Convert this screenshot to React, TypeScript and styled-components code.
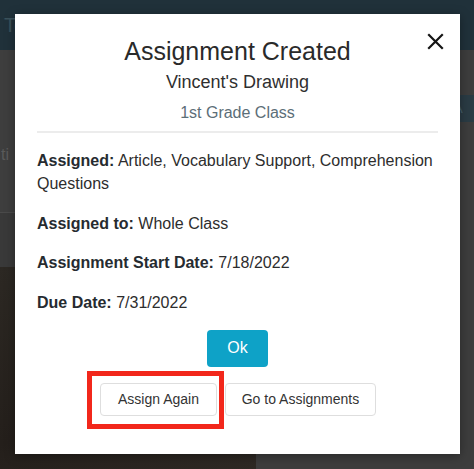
import React from 'react';
import styled, { createGlobalStyle } from 'styled-components';

const GlobalStyle = createGlobalStyle`
  html, body {
    margin: 0;
    padding: 0;
    overflow: hidden;
  }
  body {
    font-family: "Liberation Sans", Arial, sans-serif;
    background: #3c3c3c;
  }
`;

const Page = styled.div`
  width: 474px;
  height: 469px;
  display: flex;
  flex-direction: column;
  position: relative;
  overflow: hidden;
`;

const TopBar = styled.div`
  height: 50px;
  background: #20313a;
  display: flex;
  align-items: center;
  padding-left: 4px;
  color: #3b525c;
  font-size: 20px;
`;

const Backdrop = styled.div`
  flex: 1;
  display: grid;
  grid-template-columns: 256px 1fr;
`;

const LeftColumn = styled.div`
  display: flex;
  flex-direction: column;
`;

const LeftTop = styled.div`
  height: 163px;
  background: #3e3e3e;
  border-bottom: 1px solid #4a4a4a;
  padding: 96px 0 0 1px;
  box-sizing: border-box;
`;

const FadedWord = styled.span`
  display: inline-block;
  color: #5a5a5a;
  font-size: 16px;
`;

const LeftMid = styled.div`
  height: 54px;
  background: #393939;
`;

const Photo = styled.div`
  flex: 1;
  background: linear-gradient(160deg, #2c2823 0%, #241f1b 60%, #2e2924 100%);
`;

const RightColumn = styled.div`
  background: #3d3d3d;
  display: flex;
  flex-direction: column;
  align-items: flex-end;
  padding-top: 45px;
`;

const GhostButton = styled.div`
  width: 20px;
  height: 27px;
  background: #2a3b44;
  color: #46606c;
  font-size: 13px;
  display: flex;
  align-items: center;
  padding-left: 4px;
`;

const Overlay = styled.div`
  position: absolute;
  top: 14px;
  left: 15px;
  width: 445px;
  height: 440px;
  box-sizing: border-box;
  background: #ffffff;
  box-shadow: 0 2px 10px rgba(0, 0, 0, 0.35);
  padding: 22px 22px 38px;
  display: flex;
  flex-direction: column;
`;

const CloseButton = styled.button`
  position: absolute;
  top: 19px;
  right: 16px;
  width: 17px;
  height: 17px;
  padding: 0;
  border: none;
  background: none;
  cursor: pointer;
  display: flex;
`;

const Header = styled.div`
  text-align: center;
  border-bottom: 2px solid #ececec;
  padding-bottom: 7px;
`;

const Title = styled.h2`
  margin: 0;
  font-size: 25px;
  line-height: 30px;
  font-weight: normal;
  color: #2a2a2a;
`;

const Subtitle = styled.div`
  margin-top: 4px;
  font-size: 18px;
  line-height: 24px;
  color: #2f2f2f;
`;

const ClassName = styled.div`
  margin-top: 8px;
  font-size: 16px;
  line-height: 22px;
  color: #5c6e78;
`;

const Details = styled.div`
  padding-top: 16px;
  display: flex;
  flex-direction: column;
  gap: 16.5px;
`;

const Detail = styled.p`
  margin: 0;
  font-size: 16px;
  line-height: 23px;
  color: #2d2d2d;
`;

const Label = styled.strong`
  font-weight: bold;
  color: #262b30;
`;

const Actions = styled.div`
  margin-top: 16px;
  display: flex;
  flex-direction: column;
  align-items: center;
  gap: 16px;
`;

const PrimaryButton = styled.button`
  width: 61px;
  height: 37px;
  border: none;
  border-radius: 4px;
  background: #0ea2c7;
  color: #ffffff;
  font-family: inherit;
  font-size: 16px;
  cursor: pointer;
`;

const ButtonRow = styled.div`
  display: flex;
  gap: 8px;
  margin-left: 1px;
`;

const SecondaryButton = styled.button<{ $width: number }>`
  width: ${(p) => p.$width}px;
  height: 33px;
  border: 1px solid #dedede;
  border-radius: 4px;
  background: #ffffff;
  color: #333333;
  font-family: inherit;
  font-size: 14px;
  cursor: pointer;
`;

const Highlighted = styled.div`
  position: relative;
  display: flex;
`;

const Callout = styled.div`
  position: absolute;
  top: -12px;
  left: -13px;
  right: -7px;
  bottom: -13px;
  border: 5px solid #f2271b;
  pointer-events: none;
`;

const CloseIcon = () => (
  <svg width="17" height="17" viewBox="0 0 17 17">
    <path d="M2 2 L15 15 M15 2 L2 15" stroke="#151515" strokeWidth="2.2" strokeLinecap="square" />
  </svg>
);

const App: React.FC = () => {
  return (
    <>
      <GlobalStyle />
      <Page>
        <TopBar>To</TopBar>
        <Backdrop>
          <LeftColumn>
            <LeftTop>
              <FadedWord>ti</FadedWord>
            </LeftTop>
            <LeftMid />
            <Photo />
          </LeftColumn>
          <RightColumn>
            <GhostButton>A</GhostButton>
          </RightColumn>
        </Backdrop>

        <Overlay>
          <CloseButton aria-label="Close">
            <CloseIcon />
          </CloseButton>
          <Header>
            <Title>Assignment Created</Title>
            <Subtitle>Vincent's Drawing</Subtitle>
            <ClassName>1st Grade Class</ClassName>
          </Header>

          <Details>
            <Detail>
              <Label>Assigned:</Label> Article, Vocabulary Support, Comprehension
              <br />
              Questions
            </Detail>
            <Detail>
              <Label>Assigned to:</Label> Whole Class
            </Detail>
            <Detail>
              <Label>Assignment Start Date:</Label> 7/18/2022
            </Detail>
            <Detail>
              <Label>Due Date:</Label> 7/31/2022
            </Detail>
          </Details>

          <Actions>
            <PrimaryButton>Ok</PrimaryButton>
            <ButtonRow>
              <Highlighted>
                <SecondaryButton $width={117}>Assign Again</SecondaryButton>
                <Callout />
              </Highlighted>
              <SecondaryButton $width={151}>Go to Assignments</SecondaryButton>
            </ButtonRow>
          </Actions>
        </Overlay>
      </Page>
    </>
  );
};

export default App;
